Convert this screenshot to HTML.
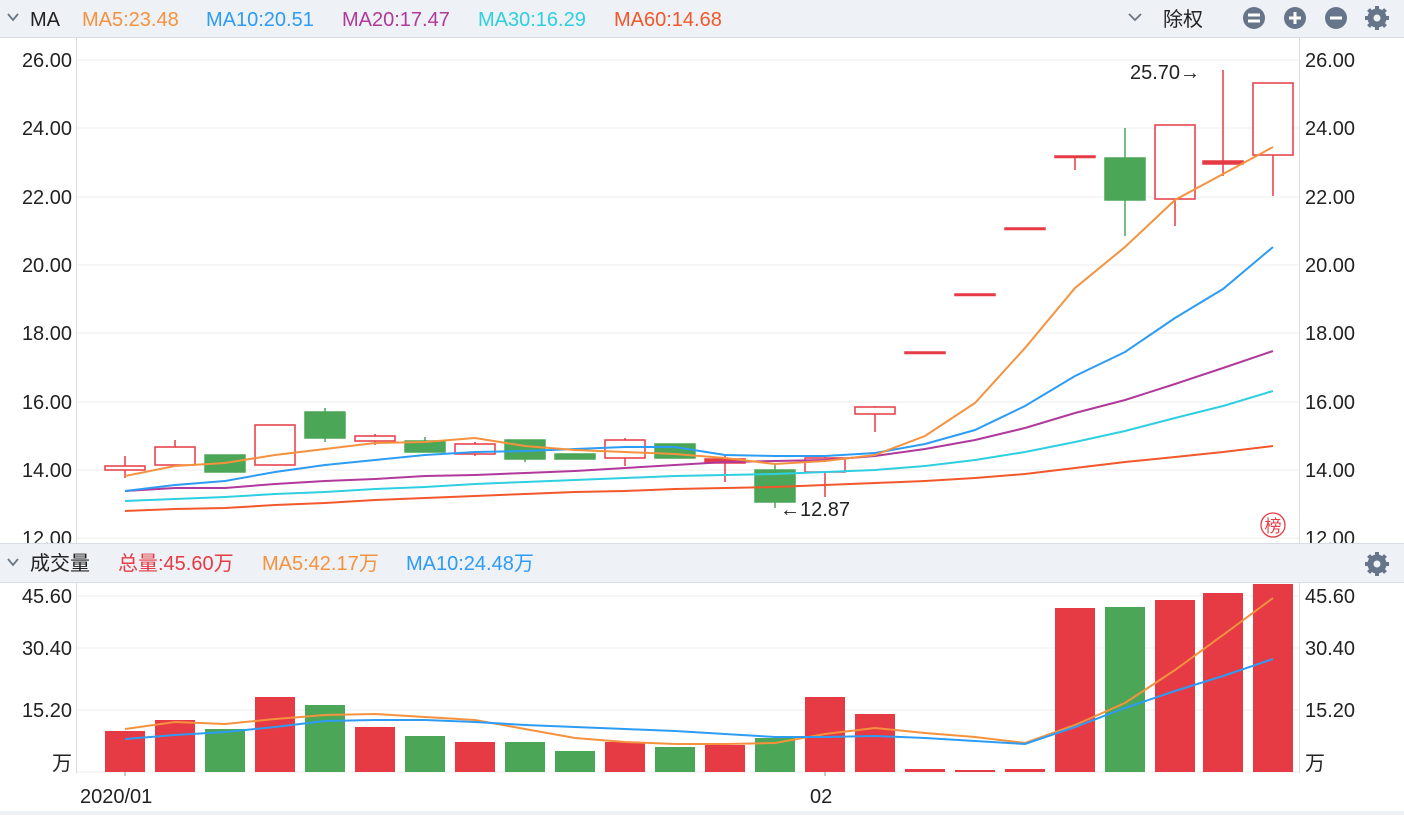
<!DOCTYPE html><html><head><meta charset="utf-8"><style>
body{margin:0;width:1404px;height:815px;overflow:hidden;background:#fff;font-family:"Liberation Sans","Noto Sans CJK SC",sans-serif}
</style></head><body>
<svg width="1404" height="815" viewBox="0 0 1404 815" xmlns="http://www.w3.org/2000/svg" font-family="Liberation Sans, Noto Sans CJK SC, sans-serif">
<rect x="0" y="0" width="1404" height="37" fill="#eef1f6"/>
<line x1="0" y1="37.5" x2="1404" y2="37.5" stroke="#d8dce3"/>
<path d="M8 14 L13 20 L18 14" fill="none" stroke="#6b7685" stroke-width="1.8"/>
<text x="30" y="26" font-size="20" fill="#222">MA</text>
<text x="82" y="26" font-size="20" fill="#f5923e">MA5:23.48</text>
<text x="206" y="26" font-size="20" fill="#2d9cf5">MA10:20.51</text>
<text x="342" y="26" font-size="20" fill="#b0399b">MA20:17.47</text>
<text x="478" y="26" font-size="20" fill="#2ecfe0">MA30:16.29</text>
<text x="614" y="26" font-size="20" fill="#f2582b">MA60:14.68</text>
<path d="M1129 14 L1135 20 L1141 14" fill="none" stroke="#6b7685" stroke-width="1.8"/>
<text x="1163" y="26" font-size="20" fill="#222">除权</text>
<g fill="#66758a"><circle cx="1254" cy="18" r="11"/><circle cx="1295" cy="18" r="11"/><circle cx="1336" cy="18" r="11"/></g>
<g stroke="#fff" stroke-width="3"><line x1="1248" y1="15" x2="1260" y2="15"/><line x1="1248" y1="21" x2="1260" y2="21"/><line x1="1289" y1="18" x2="1301" y2="18"/><line x1="1295" y1="12" x2="1295" y2="24"/><line x1="1330" y1="18" x2="1342" y2="18"/></g>
<g id="gear"><circle cx="1377" cy="18" r="7" fill="none" stroke="#66758a" stroke-width="5"/><g stroke="#66758a" stroke-width="4"><line x1="1377" y1="6" x2="1377" y2="30"/><line x1="1365" y1="18" x2="1389" y2="18"/><line x1="1368.5" y1="9.5" x2="1385.5" y2="26.5"/><line x1="1385.5" y1="9.5" x2="1368.5" y2="26.5"/></g><circle cx="1377" cy="18" r="3.5" fill="#eef1f6"/></g>
<!-- axes -->
<line x1="76.5" y1="38" x2="76.5" y2="773" stroke="#ddd"/>
<line x1="1299.5" y1="38" x2="1299.5" y2="773" stroke="#ddd"/>
<g stroke="#ececec"><line x1="77" y1="60" x2="1299" y2="60"/><line x1="77" y1="128" x2="1299" y2="128"/><line x1="77" y1="197" x2="1299" y2="197"/><line x1="77" y1="265" x2="1299" y2="265"/><line x1="77" y1="333" x2="1299" y2="333"/><line x1="77" y1="402" x2="1299" y2="402"/><line x1="77" y1="470" x2="1299" y2="470"/><line x1="77" y1="538" x2="1299" y2="538"/>
<line x1="77" y1="596" x2="1299" y2="596"/><line x1="77" y1="648" x2="1299" y2="648"/><line x1="77" y1="710" x2="1299" y2="710"/><line x1="77" y1="772" x2="1299" y2="772"/></g>
<g font-size="20" fill="#222" text-anchor="end">
<text x="72" y="67">26.00</text><text x="72" y="135">24.00</text><text x="72" y="204">22.00</text><text x="72" y="272">20.00</text><text x="72" y="340">18.00</text><text x="72" y="409">16.00</text><text x="72" y="477">14.00</text><text x="72" y="545">12.00</text>
<text x="72" y="603">45.60</text><text x="72" y="655">30.40</text><text x="72" y="717">15.20</text><text x="72" y="770">万</text></g>
<g font-size="20" fill="#222">
<text x="1305" y="67">26.00</text><text x="1305" y="135">24.00</text><text x="1305" y="204">22.00</text><text x="1305" y="272">20.00</text><text x="1305" y="340">18.00</text><text x="1305" y="409">16.00</text><text x="1305" y="477">14.00</text><text x="1305" y="545">12.00</text>
<text x="1305" y="603">45.60</text><text x="1305" y="655">30.40</text><text x="1305" y="717">15.20</text><text x="1305" y="770">万</text></g>
<!-- candles -->
<g stroke="#e63a44" stroke-width="1.5" fill="#fff">
<line x1="125" y1="456" x2="125" y2="478"/><rect x="105" y="466" width="40" height="4"/>
<line x1="175" y1="440" x2="175" y2="465"/><rect x="155" y="447" width="40" height="18"/>
<line x1="275" y1="425" x2="275" y2="465"/><rect x="255" y="425" width="40" height="40"/>
<line x1="375" y1="434" x2="375" y2="445"/><rect x="355" y="436" width="40" height="5"/>
<line x1="475" y1="442" x2="475" y2="456"/><rect x="455" y="444" width="40" height="10"/>
<line x1="625" y1="438" x2="625" y2="466"/><rect x="605" y="440" width="40" height="18"/>
<line x1="725" y1="455" x2="725" y2="482"/><rect x="705" y="459" width="40" height="4" fill="#e63a44"/>
<line x1="825" y1="456" x2="825" y2="497"/><rect x="805" y="458" width="40" height="14"/>
<line x1="875" y1="406" x2="875" y2="432"/><rect x="855" y="407" width="40" height="7"/>
<rect x="905" y="352" width="40" height="1.5" fill="#e63a44"/>
<rect x="955" y="294" width="40" height="1.5" fill="#e63a44"/>
<rect x="1005" y="228" width="40" height="1.5" fill="#e63a44"/>
<line x1="1075" y1="157" x2="1075" y2="170"/><rect x="1055" y="156" width="40" height="1.5" fill="#e63a44"/>
<line x1="1175" y1="199" x2="1175" y2="226"/><rect x="1155" y="125" width="40" height="74"/>
<line x1="1223" y1="70" x2="1223" y2="176"/><rect x="1203" y="161" width="40" height="3" fill="#e63a44"/>
<line x1="1273" y1="155" x2="1273" y2="196"/><rect x="1253" y="83" width="40" height="72"/>
</g>
<g stroke="#4ba657" stroke-width="1.5" fill="#4ba657">
<rect x="205" y="455" width="40" height="17"/>
<line x1="325" y1="408" x2="325" y2="442"/><rect x="305" y="412" width="40" height="26"/>
<line x1="425" y1="437" x2="425" y2="452"/><rect x="405" y="441" width="40" height="11"/>
<line x1="525" y1="440" x2="525" y2="462"/><rect x="505" y="440" width="40" height="19"/>
<rect x="555" y="454" width="40" height="5"/>
<rect x="655" y="444" width="40" height="14"/>
<line x1="775" y1="465" x2="775" y2="508"/><rect x="755" y="470" width="40" height="32"/>
<line x1="1125" y1="128" x2="1125" y2="236"/><rect x="1105" y="158" width="40" height="42"/>
</g>
<text x="1130" y="79" font-size="20" fill="#222">25.70→</text>
<text x="780" y="516" font-size="20" fill="#222">←12.87</text>
<circle cx="1273" cy="525" r="12" fill="none" stroke="#e63a44" stroke-width="1.3"/>
<text x="1273" y="532" font-size="17" fill="#e63a44" text-anchor="middle">榜</text>
<!-- MA lines -->
<g fill="none" stroke-width="2">
<polyline stroke="#f2582b" points="125,511 175,509 225,508 275,505 325,503 375,500 425,498 475,496 525,494 575,492 625,491 675,489 725,488 775,487 825,485 875,483 925,481 975,478 1025,474 1075,468 1125,462 1175,457 1223,452 1273,446"/>
<polyline stroke="#2ecfe0" points="125,501 175,499 225,497 275,494 325,492 375,489 425,487 475,484 525,482 575,480 625,478 675,476 725,475 775,474 825,472 875,470 925,466 975,460 1025,452 1075,442 1125,431 1175,418 1223,406 1273,391"/>
<polyline stroke="#b0399b" points="125,491 175,488 225,488 275,484 325,481 375,479 425,476 475,475 525,473 575,471 625,468 675,465 725,462 775,461 825,460 875,456 925,449 975,440 1025,428 1075,413 1125,400 1175,384 1223,368 1273,351"/>
<polyline stroke="#2d9cf5" points="125,491 175,485 225,481 275,472 325,465 375,460 425,455 475,452 525,451 575,449 625,447 675,447 725,455 775,456 825,456 875,453 925,444 975,430 1025,406 1075,376 1125,352 1175,318 1223,289 1273,247"/>
<polyline stroke="#f5923e" points="125,476 175,466 225,463 275,455 325,449 375,443 425,442 475,438 525,446 575,450 625,452 675,454 725,458 775,464 825,461 875,455 925,436 975,403 1025,348 1075,288 1125,247 1175,200 1223,174 1273,147"/>
</g>
<!-- volume header -->
<rect x="0" y="543" width="1404" height="39" fill="#eef1f6"/>
<line x1="0" y1="543.5" x2="1404" y2="543.5" stroke="#d8dce3"/><line x1="0" y1="582.5" x2="1404" y2="582.5" stroke="#d8dce3"/>
<path d="M8 559 L13 565 L18 559" fill="none" stroke="#6b7685" stroke-width="1.8"/>
<text x="30" y="570" font-size="20" fill="#222">成交量</text>
<text x="118" y="570" font-size="20" fill="#e63a44">总量:45.60万</text>
<text x="262" y="570" font-size="20" fill="#f5923e">MA5:42.17万</text>
<text x="406" y="570" font-size="20" fill="#2d9cf5">MA10:24.48万</text>
<use href="#gear" transform="translate(0,546)"/>
<!-- volume bars -->
<g fill="#e63a44">
<rect x="105" y="731" width="40" height="41"/><rect x="155" y="720" width="40" height="52"/><rect x="255" y="697" width="40" height="75"/><rect x="355" y="727" width="40" height="45"/><rect x="455" y="742" width="40" height="30"/><rect x="605" y="742" width="40" height="30"/><rect x="705" y="745" width="40" height="27"/><rect x="805" y="697" width="40" height="75"/><rect x="855" y="714" width="40" height="58"/><rect x="905" y="769" width="40" height="3"/><rect x="955" y="770" width="40" height="2"/><rect x="1005" y="769" width="40" height="3"/><rect x="1055" y="608" width="40" height="164"/><rect x="1155" y="600" width="40" height="172"/><rect x="1203" y="593" width="40" height="179"/><rect x="1253" y="584" width="40" height="188"/></g>
<g fill="#4ba657">
<rect x="205" y="729" width="40" height="43"/><rect x="305" y="705" width="40" height="67"/><rect x="405" y="736" width="40" height="36"/><rect x="505" y="742" width="40" height="30"/><rect x="555" y="751" width="40" height="21"/><rect x="655" y="747" width="40" height="25"/><rect x="755" y="738" width="40" height="34"/><rect x="1105" y="607" width="40" height="165"/></g>
<g fill="none" stroke-width="2">
<polyline stroke="#f5923e" points="125,729 175,722 225,724 275,719 325,715 375,714 425,717 475,720 525,729 575,738 625,742 675,744 725,744 775,743 825,734 875,728 925,733 975,737 1025,743 1075,725 1125,703 1175,670 1223,635 1273,598"/>
<polyline stroke="#2d9cf5" points="125,739 175,735 225,732 275,727 325,721 375,720 425,720 475,722 525,725 575,727 625,729 675,731 725,734 775,737 825,737 875,736 925,738 975,741 1025,744 1075,727 1125,708 1175,691 1223,676 1273,659"/>
</g>
<line x1="125" y1="772" x2="125" y2="776" stroke="#999"/><line x1="825" y1="772" x2="825" y2="776" stroke="#999"/>
<text x="80" y="803" font-size="20" fill="#222">2020/01</text>
<text x="810" y="803" font-size="20" fill="#222">02</text>
<rect x="0" y="811" width="1404" height="4" fill="#eef1f6"/>
</svg>
</body></html>
